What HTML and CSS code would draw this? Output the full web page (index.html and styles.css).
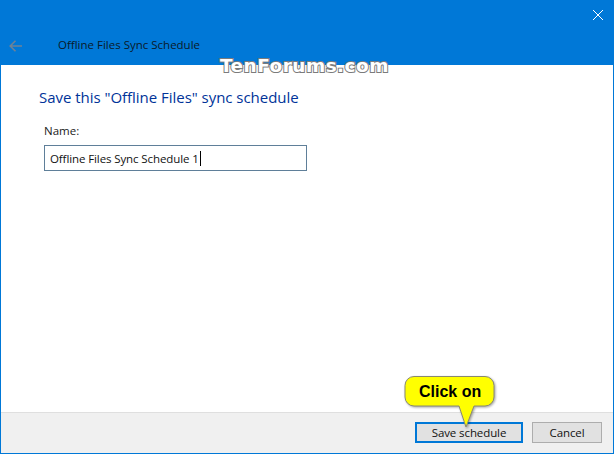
FILE: index.html
```html
<!DOCTYPE html>
<html lang="en">
<head>
<meta charset="utf-8">
<title>Offline Files Sync Schedule</title>
<link rel="stylesheet" href="styles.css">
</head>
<body>
<div class="window">
  <header class="titlebar">
    <div class="closerow">
      <svg class="close" width="10" height="10" viewBox="0 0 10 10"><path d="M0 0L10 10M10 0L0 10" stroke="#fff" stroke-width="1" fill="none"/></svg>
    </div>
    <div class="navrow">
      <svg class="back" width="13" height="12" viewBox="0 0 13 12"><path d="M13 6H1.500M6.500 .8L1.200 6l5.300 5.200" stroke="#6e8296" stroke-width="1.600" fill="none"/></svg>
      <span class="wintitle">Offline Files Sync Schedule</span>
    </div>
  </header>
  <main class="content">
    <h1 class="heading">Save this "Offline Files" sync schedule</h1>
    <label class="namelabel" for="name">Name:</label>
    <div class="namebox" id="name"><span>Offline Files Sync Schedule 1</span><i class="caret"></i></div>
  </main>
  <footer class="footer">
    <div class="btn primary">Save schedule</div>
    <div class="btn">Cancel</div>
  </footer>
</div>
<div class="watermark">TenForums.com</div>
<div class="callout">
  <svg class="callout-shape" width="100" height="60" viewBox="0 0 100 60">
    <path d="M11 1.500H82a9 9 0 0 1 9 9V22a9 9 0 0 1-9 9H71L63 52L56 31H11a9 9 0 0 1-9-9V10.500a9 9 0 0 1 9-9Z" fill="#ffff00" stroke="#8a8a70" stroke-width="1"/>
  </svg>
  <span class="callout-text">Click on</span>
</div>
</body>
</html>
```
FILE: styles.css
```css
html, body { margin: 0; padding: 0; }
body { width: 614px; height: 454px; position: relative; overflow: hidden; background: #fff; font-family: "Open Sans", "Noto Sans", sans-serif; color: #000; }
.window { box-sizing: border-box; width: 614px; height: 454px; display: flex; flex-direction: column; border: 1px solid #0078d7; border-top: 0; }
.titlebar { height: 65px; flex: none; background: #0078d7; display: flex; flex-direction: column; margin: 0 -1px; }
.closerow { height: 36px; display: flex; justify-content: flex-end; padding: 10px 11px 0 0; box-sizing: border-box; }
.close { display: block; }
.navrow { display: flex; align-items: center; height: 18px; padding-left: 9px; }
.back { display: block; margin-top: 1px; }
.wintitle { margin-left: 36px; font-size: 11.500px; line-height: 18px; color: #0a1a2a; }
.content { flex: 1; background: #fff; padding: 22px 0 0 38px; }
.heading { margin: 0; font-weight: 400; font-size: 15px; line-height: 20px; letter-spacing: -.03px; color: #003399; }
.namelabel { display: block; margin: 16px 0 0 5px; font-size: 11.500px; line-height: 16px; color: #1a1a1a; }
.namebox { box-sizing: border-box; display: flex; align-items: center; width: 263px; height: 26px; margin: 6px 0 0 5px; padding-left: 5px; border: 1px solid #5f7f99; font-size: 11.500px; letter-spacing: -.1px; color: #111; }
.caret { display: block; width: 1px; height: 15px; margin-left: 1px; background: #000; }
.footer { height: 41px; flex: none; box-sizing: border-box; background: #f0f0f0; border-top: 1px solid #dfdfdf; display: flex; justify-content: flex-end; align-items: flex-start; gap: 9px; padding: 9px 11px 0 0; }
.btn { box-sizing: border-box; width: 70px; height: 21px; background: #e1e1e1; border: 1px solid #adadad; font-size: 11.500px; line-height: 19px; text-align: center; letter-spacing: -.1px; color: #111; }
.primary { width: 108px; border: 2px solid #0078d7; line-height: 17px; }
.watermark { position: absolute; left: 220px; top: 55px; font-family: "DejaVu Sans", sans-serif; font-weight: 700; font-size: 18.500px; line-height: 22px; color: #fff; -webkit-text-stroke: 2px #7b7b7b; paint-order: stroke fill; letter-spacing: .45px; }
.callout { position: absolute; left: 403px; top: 375px; width: 100px; height: 60px; }
.callout-shape { display: block; filter: drop-shadow(1px 1px 1px rgba(0,0,0,.35)); }
.callout-text { position: absolute; left: 16px; top: 7px; font-family: "Liberation Sans", Arial, sans-serif; font-weight: 700; font-size: 16px; line-height: 20px; }
```
